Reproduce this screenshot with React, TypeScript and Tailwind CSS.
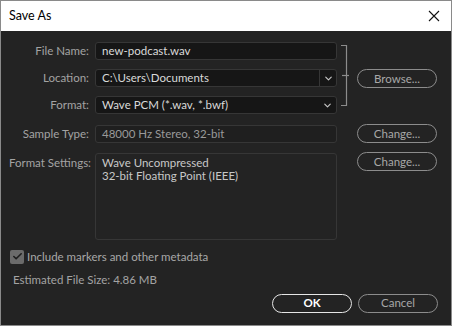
import { Check, ChevronDown } from "lucide-react";

const font = { fontFamily: 'Lato, "Liberation Sans", sans-serif' };

function Label({ children }: { children: React.ReactNode }) {
  return <div className="w-[89px] shrink-0 text-right pr-[1px] text-[#a3a3a3] whitespace-nowrap">{children}</div>;
}

function Field({ children, dim, select, split }: { children: React.ReactNode; dim?: boolean; select?: boolean; split?: boolean }) {
  return (
    <div className={`ml-[5px] w-[242px] h-[18px] rounded-[3px] border border-[#363636] flex items-center ${dim ? "text-[#9a9a9a] bg-[#1f1f1f]" : "text-[#dadada] bg-[#161616]"}`}>
      <span className="flex-1 pl-[6px] truncate">{children}</span>
      {select && (
        <span className={`w-[17px] h-full flex items-center justify-center ${split ? "border-l border-[#363636]" : ""}`}>
          <ChevronDown size={11} strokeWidth={2.5} className="text-[#c8c8c8]" />
        </span>
      )}
    </div>
  );
}

function Pill({ children, className = "" }: { children: React.ReactNode; className?: string }) {
  return (
    <button className={`w-[80px] h-[19px] rounded-full border-[1.5px] border-[#8c8c8c] text-[#a8a8a8] flex items-center justify-center ${className}`}>
      {children}
    </button>
  );
}

export default function App() {
  return (
    <div style={font} className="w-[452px] h-[326px] border border-[#8a8a8a] bg-[#232323] text-[11.5px] flex flex-col">
      {/* title bar */}
      <div className="h-[30px] bg-white flex items-center justify-between pl-[8px] pr-[10px] text-black">
        <span className="text-[12.5px]">Save As</span>
        <svg width="12" height="12" viewBox="0 0 12 12" className="mr-[1px]">
          <path d="M1 1L11 11M11 1L1 11" stroke="#111" strokeWidth="1.1" />
        </svg>
      </div>

      <div className="flex-1 flex flex-col pt-[11px]">
        {/* name / location / format */}
        <div className="flex">
          <div className="flex flex-col gap-[9px]">
            <div className="flex items-center"><Label>File Name:</Label><Field>new-podcast.wav</Field></div>
            <div className="flex items-center"><Label>Location:</Label><Field select split>C:\Users\Documents</Field></div>
            <div className="flex items-center"><Label>Format:</Label><Field select>Wave PCM (*.wav, *.bwf)</Field></div>
          </div>
          <svg width="10" height="64" viewBox="0 0 10 64" className="ml-[4px] mt-[3px]">
            <path d="M0 0.5H5.5V60.5H0" fill="none" stroke="#8c8c8c" strokeWidth="1.2" />
            <path d="M1 30.5H8" stroke="#8c8c8c" strokeWidth="1.2" />
          </svg>
          <Pill className="ml-[6px] mt-[27px]">Browse...</Pill>
        </div>

        {/* sample type */}
        <div className="flex items-center mt-[10px]">
          <Label>Sample Type:</Label>
          <Field dim>48000 Hz Stereo, 32-bit</Field>
          <Pill className="ml-[20px]">Change...</Pill>
        </div>

        {/* format settings */}
        <div className="flex items-start mt-[10px]">
          <div className="w-[90px] shrink-0 text-right text-[#a3a3a3] pt-[1px] whitespace-nowrap">Format Settings:</div>
          <div className="ml-[4px] w-[242px] h-[87px] rounded-[3px] border border-[#363636] bg-[#232323] text-[#c8c8c8] pl-[6px] pt-[2px] leading-[13px]">
            <div>Wave Uncompressed</div>
            <div>32-bit Floating Point (IEEE)</div>
          </div>
          <Pill className="ml-[20px] -mt-[1px]">Change...</Pill>
        </div>

        {/* metadata */}
        <div className="flex items-center mt-[8px] pl-[9px]">
          <span className="w-[14px] h-[14px] rounded-[2px] bg-[#6b6b6b] flex items-center justify-center">
            <Check size={11} strokeWidth={3.5} className="text-[#1e1e1e]" />
          </span>
          <span className="ml-[3px] text-[#a8a8a8]">Include markers and other metadata</span>
        </div>
        <div className="mt-[6px] pl-[12px] text-[#a3a3a3]">Estimated File Size: 4.86 MB</div>

        {/* actions */}
        <div className="flex justify-end gap-[6px] pr-[13px] mt-[5px]">
          <Pill className="!border-[#e6e6e6] !text-white font-bold">OK</Pill>
          <Pill>Cancel</Pill>
        </div>
      </div>
    </div>
  );
}
